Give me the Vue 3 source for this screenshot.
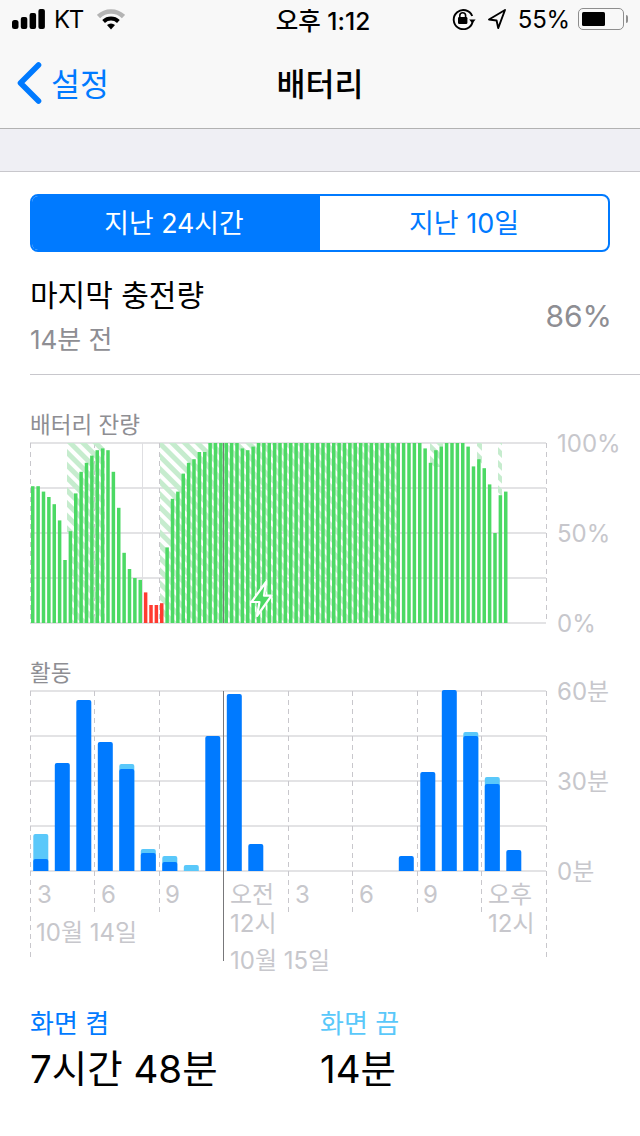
<script setup>
// battery level per 15 min slot, in percent
const levels = [
  76, 76, 73, 70, 66, 57, 35, 51, 72, 84, 89, 93, 96, 97, 96, 84, 64, 39, 30, 25, 24,
  17, 10, 10, 11,
  42, 69, 73, 83, 89, 91, 95, 95, 100, 100, 100, 100, 100, 100, 97, 96, 98,
  100, 100, 100, 100, 100, 100, 100, 100, 100, 100, 100, 100, 100, 100, 100, 100, 100, 100,
  100, 100, 100, 100, 100, 100, 100, 100, 100, 100, 100, 100, 100,
  97, 89, 96, 98, 100, 100, 100, 100, 98, 87, 91, 86, 77, 50, 71, 73,
]

const batteryBars = levels.map((v, i) => ({
  x: 31 + i * 5.375,
  y: 623 - v * 1.8,
  h: v * 1.8,
  color: i >= 21 && i <= 24 ? '#ff3b30' : '#4cd964',
}))

// on / off minutes drawn as pixel heights from the base line
const activity = [
  [12, 37], [108, 0], [171, 0], [129, 0], [102, 107], [18, 22], [9, 15], [0, 6], [135, 0],
  [177, 0], [27, 0], [0, 0], [0, 0], [0, 0], [0, 0], [0, 0], [0, 0], [15, 0], [99, 0],
  [181, 0], [135, 139], [87, 94], [21, 0],
]

const activityBars = activity.map(([on, off], i) => ({ x: 33.3 + i * 21.5, on, off }))

const dashedLong = [30.5, 546.5]
const dashedShort = [94.5, 159.5, 288.5, 352.5, 417.5, 481.5]
const batteryGrid = [443, 488, 533, 578, 623]
const activityGrid = [691, 736, 781, 826, 871]
</script>

<template>
  <div class="page">
    <header class="status">
      <div class="status-left">
        <svg class="signal" width="33" height="20" viewBox="0 0 33 20">
          <rect x="0" y="11" width="6.5" height="9" rx="2.5" />
          <rect x="8.8" y="8" width="6.5" height="12" rx="2" />
          <rect x="17.6" y="4" width="6.5" height="16" rx="2" />
          <rect x="26.4" y="0" width="6.5" height="20" rx="2" />
        </svg>
        <span class="carrier">KT</span>
        <svg class="wifi" width="28" height="22" viewBox="0 0 28 22">
          <path d="M1.5 8.5a18 18 0 0 1 25 0" fill="none" stroke="#b4b4b4" stroke-width="4.6" />
          <path d="M6.6 13.4a11 11 0 0 1 14.8 0" fill="none" stroke="#000" stroke-width="4" />
          <path d="M10 17a6 6 0 0 1 8 0l-4 4.4z" fill="#000" />
        </svg>
      </div>
      <div class="time">오후 1:12</div>
      <div class="status-right">
        <svg class="lock" width="24" height="22" viewBox="0 0 24 22">
          <path d="M20.2 8a9.6 9.6 0 1 0 .4 6" fill="none" stroke="#000" stroke-width="1.9" />
          <path d="M17.2 11.4h6.4l-3.2 4z" fill="#000" />
          <rect x="6" y="9" width="9.4" height="7" rx="1.2" fill="#000" />
          <path d="M7.8 9.5V7.6a2.9 2.9 0 0 1 5.8 0v1.9" fill="none" stroke="#000" stroke-width="1.6" />
        </svg>
        <svg class="arrow" width="20" height="22" viewBox="0 0 20 22">
          <path d="M18 2 2 11.5l7.6 1 1.6 7.6z" fill="none" stroke="#000" stroke-width="1.9" stroke-linejoin="round" />
        </svg>
        <span class="percent">55%</span>
        <div class="battery">
          <div class="battery-body"><div class="battery-fill"></div></div>
          <div class="battery-tip"></div>
        </div>
      </div>
    </header>

    <nav class="nav">
      <div class="back">
        <svg width="26" height="44" viewBox="0 0 26 44">
          <path d="M21.5 4 3.5 22 21.5 40" fill="none" stroke="#007aff" stroke-width="5.6" stroke-linecap="round" stroke-linejoin="round" />
        </svg>
        <span>설정</span>
      </div>
      <div class="title">배터리</div>
      <div></div>
    </nav>

    <div class="band"></div>

    <div class="segments">
      <div class="segment active">지난 24시간</div>
      <div class="segment">지난 10일</div>
    </div>

    <section class="last-charge">
      <div class="charge-text">
        <div class="charge-title">마지막 충전량</div>
        <div class="charge-sub">14분 전</div>
      </div>
      <div class="charge-value">86%</div>
    </section>

    <div class="chart-title battery-title">배터리 잔량</div>
    <svg class="chart" width="640" height="200" viewBox="0 440 640 200">
      <defs>
        <pattern id="hatch" width="9" height="9" patternUnits="userSpaceOnUse" patternTransform="rotate(45)">
          <rect width="9" height="5" fill="#c6ecce" />
        </pattern>
      </defs>
      <line v-for="y in batteryGrid" :key="y" x1="30" x2="546" :y1="y" :y2="y" class="grid" />
      <line v-for="x in dashedLong" :key="x" :x1="x" :x2="x" y1="443" y2="623" class="dash" />
      <line x1="94.500" x2="94.500" y1="443" y2="623" class="dash" />
      <line x1="142.500" x2="142.500" y1="443" y2="623" class="thin" />
      <line x1="159.500" x2="159.500" y1="443" y2="623" class="dash" />
      <path d="M67 443H105V623H71V532H67z" fill="url(#hatch)" />
      <rect x="160" y="443" width="238" height="180" fill="url(#hatch)" />
      <rect x="430" y="443" width="13" height="24" fill="url(#hatch)" />
      <rect x="477" y="443" width="5" height="24" fill="url(#hatch)" />
      <rect x="498" y="443" width="4" height="52" fill="url(#hatch)" />
      <rect
        v-for="(b, i) in batteryBars"
        :key="i"
        :x="b.x"
        :y="b.y"
        width="3.500"
        :height="b.h"
        :fill="b.color"
      />
      <line x1="223.500" x2="223.500" y1="443" y2="623" class="solid" />
      <path d="M266 582 251.500 602h8l-2.500 14 14.500-20.300h-7.500z" fill="#4cd964" stroke="#fff" stroke-width="2.200" stroke-linejoin="round" />
      <text x="557" y="452" class="axis">100%</text>
      <text x="557" y="542" class="axis">50%</text>
      <text x="557" y="632" class="axis">0%</text>
    </svg>

    <div class="chart-title activity-title">활동</div>
    <svg class="chart" width="640" height="285" viewBox="0 688 640 285">
      <line v-for="y in activityGrid" :key="y" x1="30" x2="546" :y1="y" :y2="y" class="grid" />
      <line v-for="x in dashedLong" :key="x" :x1="x" :x2="x" y1="691" y2="958" class="dash" />
      <line v-for="x in dashedShort" :key="x" :x1="x" :x2="x" y1="691" y2="915" class="dash" />
      <line x1="223.500" x2="223.500" y1="691" y2="961" class="solid" />
      <g v-for="(b, i) in activityBars" :key="i">
        <path
          v-if="b.off"
          :d="`M${b.x} 871v${-b.off + 2}q0-2 2-2h11q2 0 2 2v${b.off - 2}z`"
          fill="#5ac8fa"
        />
        <path
          v-if="b.on"
          :d="`M${b.x} 871v${-b.on + 2}q0-2 2-2h11q2 0 2 2v${b.on - 2}z`"
          fill="#007aff"
        />
      </g>
      <text x="37" y="903" class="axis">3</text>
      <text x="101" y="903" class="axis">6</text>
      <text x="165" y="903" class="axis">9</text>
      <text x="230" y="903" class="axis">오전</text>
      <text x="230" y="932" class="axis">12시</text>
      <text x="295" y="903" class="axis">3</text>
      <text x="359" y="903" class="axis">6</text>
      <text x="423" y="903" class="axis">9</text>
      <text x="488" y="903" class="axis">오후</text>
      <text x="488" y="932" class="axis">12시</text>
      <text x="36" y="941" class="axis">10월 14일</text>
      <text x="230" y="969" class="axis">10월 15일</text>
      <text x="557" y="700" class="axis">60분</text>
      <text x="557" y="790" class="axis">30분</text>
      <text x="557" y="880" class="axis">0분</text>
    </svg>

    <section class="stats">
      <div class="stat">
        <div class="stat-label on">화면 켬</div>
        <div class="stat-value">7시간 48분</div>
      </div>
      <div class="stat">
        <div class="stat-label off">화면 끔</div>
        <div class="stat-value">14분</div>
      </div>
    </section>
  </div>
</template>

<style scoped>
.page {
  width: 640px;
  height: 1136px;
  overflow: hidden;
  background: #fff;
  color: #000;
  font-family: Inter, "Noto Sans CJK KR", sans-serif;
}

.status {
  height: 40px;
  padding: 0 12px 2px;
  box-sizing: border-box;
  display: grid;
  grid-template-columns: 1fr auto 1fr;
  align-items: center;
  background: #f8f8f8;
  font-size: 24px;
}

.status-left,
.status-right {
  display: flex;
  align-items: center;
}

.status-right {
  justify-content: flex-end;
}

.signal {
  fill: #000;
}

.carrier {
  margin-left: 9px;
  letter-spacing: -1.5px;
}

.wifi {
  margin-left: 14px;
}

.time {
  margin-left: 6px;
  font-size: 24.5px;
  font-weight: 500;
}

.arrow {
  margin-left: 11px;
}

.percent {
  margin-left: 11px;
  letter-spacing: -0.2px;
}

.battery {
  margin-left: 8px;
  display: flex;
  align-items: center;
}

.battery-body {
  width: 46px;
  height: 22px;
  padding: 3px;
  box-sizing: border-box;
  border: 1.500px solid #8e8e8e;
  border-radius: 5px;
}

.battery-fill {
  width: 23px;
  height: 100%;
  background: #000;
  border-radius: 1.500px;
}

.battery-tip {
  width: 2px;
  height: 8px;
  margin-left: 2px;
  background: #8e8e8e;
  border-radius: 0 2px 2px 0;
}

.nav {
  height: 89px;
  padding-bottom: 5px;
  box-sizing: border-box;
  display: grid;
  grid-template-columns: 1fr auto 1fr;
  align-items: center;
  background: #f8f8f8;
  border-bottom: 1px solid #b2b2b2;
}

.back {
  margin-left: 17px;
  display: flex;
  align-items: center;
  gap: 8px;
  color: #007aff;
  font-size: 31.5px;
}

.back svg {
  margin-top: 3px;
}

.title {
  font-size: 31.5px;
  font-weight: 500;
}

.band {
  height: 43px;
  box-sizing: border-box;
  background: #efeff4;
  border-bottom: 1px solid #c8c7cc;
}

.segments {
  margin: 22px 30px 0;
  height: 58px;
  box-sizing: border-box;
  display: grid;
  grid-template-columns: 1fr 1fr;
  border: 2px solid #007aff;
  border-radius: 8px;
  overflow: hidden;
}

.segment {
  padding-bottom: 3px;
  display: flex;
  align-items: center;
  justify-content: center;
  color: #007aff;
  font-size: 27px;
}

.segment.active {
  padding-right: 4px;
  background: #007aff;
  color: #fff;
  font-size: 26.8px;
}

.last-charge {
  height: 123px;
  margin-left: 30px;
  padding: 5px 28px 0 0;
  box-sizing: border-box;
  display: flex;
  justify-content: space-between;
  align-items: center;
  border-bottom: 1px solid #c8c7cc;
}

.charge-text {
  margin-top: 3px;
}

.charge-title {
  font-size: 30px;
  line-height: 46px;
}

.charge-sub {
  font-size: 26px;
  line-height: 44px;
  color: #8e8e93;
}

.charge-value {
  font-size: 30px;
  color: #8e8e93;
}

.chart-title {
  margin-left: 30px;
  font-size: 22.5px;
  line-height: 30px;
  color: #8e8e93;
}

.battery-title {
  margin-top: 35px;
}

.activity-title {
  margin-top: 18px;
}

.chart {
  display: block;
  overflow: visible;
}

.grid {
  stroke: #c8c7cc;
  stroke-width: 1.200;
}

.dash {
  stroke: #c8c7cc;
  stroke-width: 1;
  stroke-dasharray: 5 4;
}

.thin {
  stroke: #dfdfe2;
  stroke-width: 1;
}

.solid {
  stroke: #77777a;
  stroke-width: 1;
}

.axis {
  font-size: 24px;
  fill: #c7c7cc;
}

.stats {
  margin: 32px 30px 0;
  display: grid;
  grid-template-columns: 290px 1fr;
}

.stat-label {
  font-size: 26px;
  line-height: 38px;
}

.stat-label.on {
  color: #007aff;
}

.stat-label.off {
  color: #5ac8fa;
}

.stat-value {
  font-size: 38.5px;
  line-height: 52px;
}
</style>

<style>
html,
body {
  margin: 0;
  background: #fff;
}
</style>
